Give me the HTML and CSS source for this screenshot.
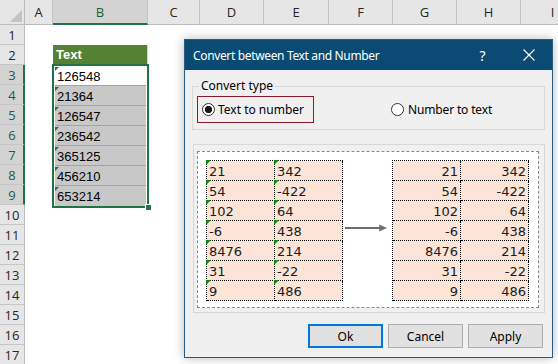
FILE: index.html
```html
<!DOCTYPE html>
<html>
<head>
<meta charset="utf-8">
<link rel="stylesheet" href="styles.css">
</head>
<body>
<div class="sheet">
  <div class="colheads">
    <div class="corner"><svg width="24" height="24" viewBox="0 0 24 24"><polygon points="22,10 22,22 10,22" fill="#c3c3c3"/></svg></div>
    <div class="ch w-a">A</div>
    <div class="ch w-b sel">B</div>
    <div class="ch w-c">C</div>
    <div class="ch">D</div>
    <div class="ch w-e">E</div>
    <div class="ch">F</div>
    <div class="ch">G</div>
    <div class="ch">H</div>
    <div class="ch">I</div>
  </div>
  <div class="body">
    <div class="rowheads">
      <div class="rh">1</div>
      <div class="rh">2</div>
      <div class="rh sel">3</div>
      <div class="rh sel">4</div>
      <div class="rh sel">5</div>
      <div class="rh sel">6</div>
      <div class="rh sel">7</div>
      <div class="rh sel">8</div>
      <div class="rh sel">9</div>
      <div class="rh">10</div>
      <div class="rh">11</div>
      <div class="rh">12</div>
      <div class="rh">13</div>
      <div class="rh">14</div>
      <div class="rh">15</div>
      <div class="rh">16</div>
      <div class="rh">17</div>
    </div>
    <div class="cells">
      <div class="colb">
        <div class="hdr-cell">Text</div>
        <div class="selection">
          <div class="cell active"><span class="tri"></span>126548</div>
          <div class="cell"><span class="tri"></span>21364</div>
          <div class="cell"><span class="tri"></span>126547</div>
          <div class="cell"><span class="tri"></span>236542</div>
          <div class="cell"><span class="tri"></span>365125</div>
          <div class="cell"><span class="tri"></span>456210</div>
          <div class="cell"><span class="tri"></span>653214</div>
          <span class="handle"></span>
        </div>
      </div>
    </div>
  </div>

  <div class="dialog">
    <div class="titlebar">
      <span class="title">Convert between Text and Number</span>
      <span class="tb-btn help">?</span>
      <span class="tb-btn close"><svg width="12" height="12" viewBox="0 0 12 12"><path d="M0.5 0.5 L11.5 11.5 M11.5 0.5 L0.5 11.5" stroke="#fff" stroke-width="1.2" fill="none"/></svg></span>
    </div>
    <div class="dbody">
      <fieldset class="group">
        <legend>Convert type</legend>
        <div class="radios">
          <div class="opt focus"><span class="radio checked"></span><span>Text to number</span></div>
          <div class="opt second"><span class="radio"></span><span>Number to text</span></div>
        </div>
      </fieldset>
      <div class="frame">
        <div class="preview">
          <div class="ptable left">
            <div class="pc"><span class="gt"></span>21</div><div class="pc"><span class="gt"></span>342</div>
            <div class="pc"><span class="gt"></span>54</div><div class="pc"><span class="gt"></span>-422</div>
            <div class="pc"><span class="gt"></span>102</div><div class="pc"><span class="gt"></span>64</div>
            <div class="pc"><span class="gt"></span>-6</div><div class="pc"><span class="gt"></span>438</div>
            <div class="pc"><span class="gt"></span>8476</div><div class="pc"><span class="gt"></span>214</div>
            <div class="pc"><span class="gt"></span>31</div><div class="pc"><span class="gt"></span>-22</div>
            <div class="pc"><span class="gt"></span>9</div><div class="pc"><span class="gt"></span>486</div>
          </div>
          <svg class="arrow" width="44" height="10" viewBox="0 0 44 10"><line x1="0" y1="5" x2="37" y2="5" stroke="#6e6e6e" stroke-width="2"/><polygon points="35,1.5 43,5 35,8.5" fill="#6e6e6e"/></svg>
          <div class="ptable right">
            <div class="pc">21</div><div class="pc">342</div>
            <div class="pc">54</div><div class="pc">-422</div>
            <div class="pc">102</div><div class="pc">64</div>
            <div class="pc">-6</div><div class="pc">438</div>
            <div class="pc">8476</div><div class="pc">214</div>
            <div class="pc">31</div><div class="pc">-22</div>
            <div class="pc">9</div><div class="pc">486</div>
          </div>
        </div>
      </div>
      <div class="buttons">
        <button class="btn default">Ok</button>
        <button class="btn">Cancel</button>
        <button class="btn">Apply</button>
      </div>
    </div>
  </div>
</div>
</body>
</html>
```

FILE: styles.css
```css
* { box-sizing: border-box; }
html, body { margin: 0; padding: 0; }
body {
  width: 558px;
  height: 364px;
  overflow: hidden;
  background: #fff;
  font-family: "Liberation Sans", Arial, sans-serif;
}
.sheet {
  position: relative;
  width: 558px;
  height: 364px;
  overflow: hidden;
}

/* column headers */
.colheads {
  display: flex;
  height: 25px;
  background: #e6e6e6;
}
.corner {
  flex: 0 0 25px;
  border-right: 1px solid #bcbcbc;
  border-bottom: 1px solid #bcbcbc;
}
.corner svg { display: block; }
.ch {
  flex: 0 0 64px;
  border-right: 1px solid #c4c4c4;
  border-bottom: 1px solid #bcbcbc;
  display: flex;
  align-items: center;
  justify-content: center;
  font-family: "Open Sans", sans-serif;
  font-size: 13px;
  color: #262626;
}
.ch.w-a { flex-basis: 28px; }
.ch.w-b { flex-basis: 95px; }
.ch.w-c { flex-basis: 52px; }
.ch.w-e { flex-basis: 65px; }
.ch.sel {
  background: #d3d3d3;
  color: #1b5e3b;
  border-bottom: 2px solid #217346;
  padding-top: 1px;
}

/* body */
.body { display: flex; }
.rowheads {
  flex: 0 0 25px;
  display: flex;
  flex-direction: column;
}
.rh {
  height: 20px;
  background: #e6e6e6;
  border-bottom: 1px solid #c6c6c6;
  border-right: 1px solid #bcbcbc;
  display: flex;
  align-items: center;
  justify-content: center;
  font-family: "Open Sans", sans-serif;
  font-size: 13px;
  color: #262626;
}
.rh.sel {
  background: #d3d3d3;
  color: #1b5e3b;
  border-right: 2px solid #217346;
  padding-left: 1px;
}
.cells { flex: 1; }
.colb {
  margin-left: 28px;
  margin-top: 20px;
  width: 95px;
}
.hdr-cell {
  height: 20px;
  background: #548235;
  color: #fff;
  font-weight: bold;
  font-size: 13px;
  line-height: 20px;
  padding-left: 3px;
  border-right: 1px solid #d0d0d0;
}
.selection {
  position: relative;
  margin: -1px 0 0 -1px;
  width: 97px;
  border: 2px solid #217346;
  padding: 0 1px;
  background: #fff;
}
.cell {
  position: relative;
  height: 20px;
  background: #c8c8c8;
  border-bottom: 1px solid #a3a3a3;
  padding-left: 2px;
  padding-top: 1px;
  line-height: 19px;
  font-size: 13px;
  color: #000;
}
.cell.active { background: #fff; }
.cell:last-of-type { border-bottom: none; }
.tri {
  position: absolute;
  top: 1px;
  left: 0;
  width: 0;
  height: 0;
  border-top: 4px solid #1e7145;
  border-right: 4px solid transparent;
}
.handle {
  position: absolute;
  right: -5px;
  bottom: -5px;
  width: 7px;
  height: 7px;
  background: #217346;
  border: 1px solid #fff;
}

/* dialog */
.dialog {
  position: absolute;
  left: 184px;
  top: 39px;
  width: 369px;
  height: 319px;
  background: #f0f0f0;
  border: 1px solid #2b5b84;
  box-shadow: 0 0 10px rgba(0, 0, 0, 0.28);
  font-family: "Noto Sans", "Open Sans", sans-serif;
  font-size: 12px;
  color: #000;
  display: flex;
  flex-direction: column;
}
.titlebar {
  height: 30px;
  flex: 0 0 30px;
  background: #0b4a72;
  color: #fff;
  display: flex;
  align-items: center;
  padding-left: 8px;
}
.title { flex: 1; letter-spacing: -0.35px; }
.tb-btn {
  width: 45px;
  height: 30px;
  display: flex;
  align-items: center;
  justify-content: center;
}
.help { font-size: 14px; }
.close { width: 47px; }
.close svg { display: block; }

.dbody {
  flex: 1;
  display: flex;
  flex-direction: column;
  padding: 0 7px 8px 7px;
}
.group {
  margin: 8px 0 0 0;
  border: 1px solid #d9d9d9;
  padding: 2px 8px 6px 4px;
  min-inline-size: auto;
}
.group legend {
  padding: 0 2px;
  margin-left: 2px;
  line-height: 16px;
}
.radios {
  display: flex;
  align-items: center;
}
.opt {
  display: flex;
  align-items: center;
  height: 27px;
}
.opt.focus {
  width: 117px;
  border: 1px solid #8b1a2c;
  padding-left: 4px;
}
.opt.second { margin-left: 77px; }
.radio {
  width: 13px;
  height: 13px;
  border-radius: 50%;
  border: 1px solid #333;
  background: #fff;
  margin-right: 3px;
  flex: 0 0 13px;
}
.radio.checked {
  background: radial-gradient(circle, #1a1a1a 0 3.4px, #fff 3.9px);
}
.opt.second .radio { margin-right: 4px; }
.opt.second span:last-child { letter-spacing: -0.15px; }

.frame {
  margin: 14px 0 0 1px;
  border: 1px solid #d7d7d7;
  padding: 6px 5px 4px 3px;
}
.preview {
  border: 1px dashed #888;
  background: #fff;
  padding: 8px 9px 6px 8px;
  display: flex;
  align-items: center;
}
.ptable {
  display: grid;
  grid-template-columns: 68px 68px;
  border-top: 1px dotted #000;
  border-left: 1px dotted #000;
}
.pc {
  position: relative;
  height: 20px;
  background: #fce4d6;
  border-right: 1px dotted #000;
  border-bottom: 1px dotted #000;
  font-family: "DejaVu Sans", sans-serif;
  font-size: 13px;
  line-height: 19px;
  padding: 1px 2px 0 2px;
  color: #1a1a2a;
}
.ptable.right .pc { text-align: right; }
.gt {
  position: absolute;
  top: -1px;
  left: -1px;
  width: 0;
  height: 0;
  border-top: 5px solid #0a8a0a;
  border-right: 5px solid transparent;
}
.arrow {
  display: block;
  margin: 0 4px 6px 2px;
}

.buttons {
  display: flex;
  justify-content: flex-end;
  gap: 5px;
  margin-top: 11px;
  padding-right: 2px;
}
.btn {
  width: 75px;
  height: 24px;
  background: #e1e1e1;
  border: 1px solid #adadad;
  font-family: "Noto Sans", "Open Sans", sans-serif;
  font-size: 12px;
  color: #000;
  padding: 0;
}
.btn.default { border: 2px solid #0078d7; }
```
